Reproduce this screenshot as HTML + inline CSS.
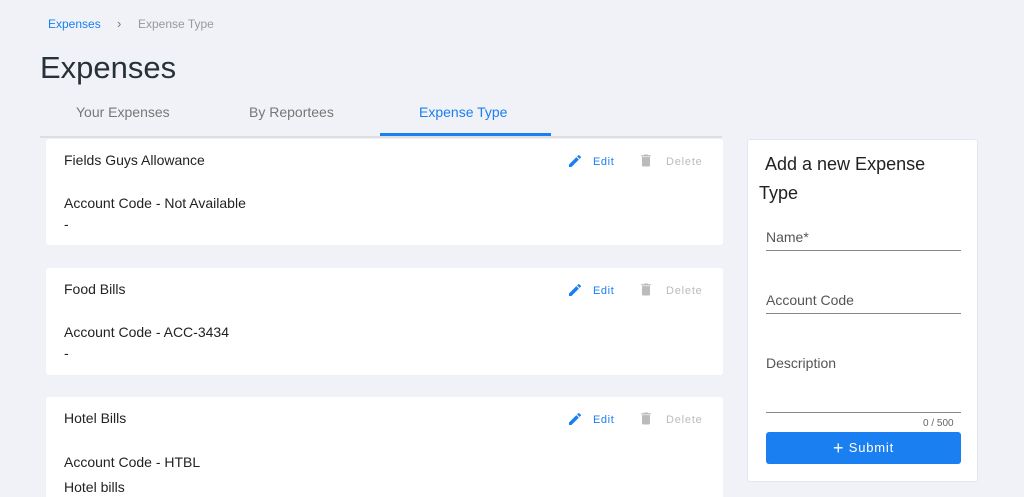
<!DOCTYPE html><html><head><style>
html,body{margin:0;width:1024px;height:497px;overflow:hidden}
body{background:#f1f2f7;font-family:"Liberation Sans",sans-serif;position:relative}
.a{position:absolute;white-space:nowrap}
.card{position:absolute;left:46px;width:677px;background:#fff;border-radius:3px}
.t{position:absolute;left:18px;font-size:14px;color:#222}
.edit{position:absolute;font-size:11px;color:#1a7ff0;letter-spacing:.6px}
.del{position:absolute;font-size:11px;color:#bbb;letter-spacing:.8px}
.lab{position:absolute;left:18px;font-size:14px;color:#555}
.line{position:absolute;left:18px;width:195px;height:1px;background:#888}
</style></head><body>
<div class="a" style="left:48px;top:17px;font-size:12px;color:#1a7ff0">Expenses</div>
<div class="a" style="left:117px;top:16px;font-size:13px;color:#777">›</div>
<div class="a" style="left:138px;top:17px;font-size:12px;color:#999">Expense Type</div>
<div class="a" style="left:40px;top:50px;font-size:31px;color:#263238">Expenses</div>
<div class="a" style="left:76px;top:104px;font-size:14px;color:#777">Your Expenses</div>
<div class="a" style="left:249px;top:104px;font-size:14px;color:#777">By Reportees</div>
<div class="a" style="left:419px;top:104px;font-size:14px;color:#1a7ff0">Expense Type</div>
<div class="a" style="left:40px;top:136px;width:682px;height:2px;background:#ddd"></div>
<div class="a" style="left:380px;top:133px;width:171px;height:3px;background:#1a7ff0"></div>

<div class="card" style="top:139px;height:106px">
<div class="t" style="top:13px">Fields Guys Allowance</div>
<svg class="a" style="left:521px;top:14px" width="16" height="16" viewBox="0 0 24 24"><path d="M3 17.25V21h3.75L17.8 9.94l-3.75-3.75z M20.7 7.04a1 1 0 000-1.41l-2.34-2.34a1 1 0 00-1.41 0l-1.83 1.83 3.75 3.75z" fill="#1a7ff0"/></svg>
<div class="edit" style="left:547px;top:17px">Edit</div>
<svg class="a" style="left:592px;top:13px" width="16" height="17" viewBox="0 0 24 24"><path d="M6 19a2 2 0 002 2h8a2 2 0 002-2V7H6zM19 4h-3.5l-1-1h-5l-1 1H5v2h14z" fill="#bbb"/></svg>
<div class="del" style="left:620px;top:17px">Delete</div>
<div class="t" style="top:56px">Account Code - Not Available</div>
<div class="t" style="top:77px">-</div>
</div>
<div class="card" style="top:268px;height:107px">
<div class="t" style="top:13px">Food Bills</div>
<svg class="a" style="left:521px;top:14px" width="16" height="16" viewBox="0 0 24 24"><path d="M3 17.25V21h3.75L17.8 9.94l-3.75-3.75z M20.7 7.04a1 1 0 000-1.41l-2.34-2.34a1 1 0 00-1.41 0l-1.83 1.83 3.75 3.75z" fill="#1a7ff0"/></svg>
<div class="edit" style="left:547px;top:17px">Edit</div>
<svg class="a" style="left:592px;top:13px" width="16" height="17" viewBox="0 0 24 24"><path d="M6 19a2 2 0 002 2h8a2 2 0 002-2V7H6zM19 4h-3.5l-1-1h-5l-1 1H5v2h14z" fill="#bbb"/></svg>
<div class="del" style="left:620px;top:17px">Delete</div>
<div class="t" style="top:56px">Account Code - ACC-3434</div>
<div class="t" style="top:77px">-</div>
</div>
<div class="card" style="top:397px;height:110px">
<div class="t" style="top:13px">Hotel Bills</div>
<svg class="a" style="left:521px;top:14px" width="16" height="16" viewBox="0 0 24 24"><path d="M3 17.25V21h3.75L17.8 9.94l-3.75-3.75z M20.7 7.04a1 1 0 000-1.41l-2.34-2.34a1 1 0 00-1.41 0l-1.83 1.83 3.75 3.75z" fill="#1a7ff0"/></svg>
<div class="edit" style="left:547px;top:17px">Edit</div>
<svg class="a" style="left:592px;top:13px" width="16" height="17" viewBox="0 0 24 24"><path d="M6 19a2 2 0 002 2h8a2 2 0 002-2V7H6zM19 4h-3.5l-1-1h-5l-1 1H5v2h14z" fill="#bbb"/></svg>
<div class="del" style="left:620px;top:17px">Delete</div>
<div class="t" style="top:57px">Account Code - HTBL</div>
<div class="t" style="top:82px">Hotel bills</div>
</div>

<div class="a" style="left:747px;top:139px;width:231px;height:343px;background:#fff;border:1px solid #e4e6ea;border-radius:3px;box-sizing:border-box">
<div class="a" style="left:17px;top:14px;font-size:18px;color:#222">Add a new Expense</div>
<div class="a" style="left:11px;top:43px;font-size:18px;color:#222">Type</div>
<div class="lab" style="top:89px">Name*</div>
<div class="line" style="top:110px"></div>
<div class="lab" style="top:152px">Account Code</div>
<div class="line" style="top:173px"></div>
<div class="lab" style="top:215px">Description</div>
<div class="line" style="top:272px"></div>
<div class="a" style="left:175px;top:278px;font-size:10px;color:#666">0 / 500</div>
<div class="a" style="left:18px;top:292px;width:195px;height:32px;background:#1a7ff0;border-radius:3px;color:#fff;font-size:13px;text-align:center;line-height:32px;letter-spacing:.8px"><span style="font-size:18px;vertical-align:-2px">+</span> Submit</div>
</div>
</body></html>
